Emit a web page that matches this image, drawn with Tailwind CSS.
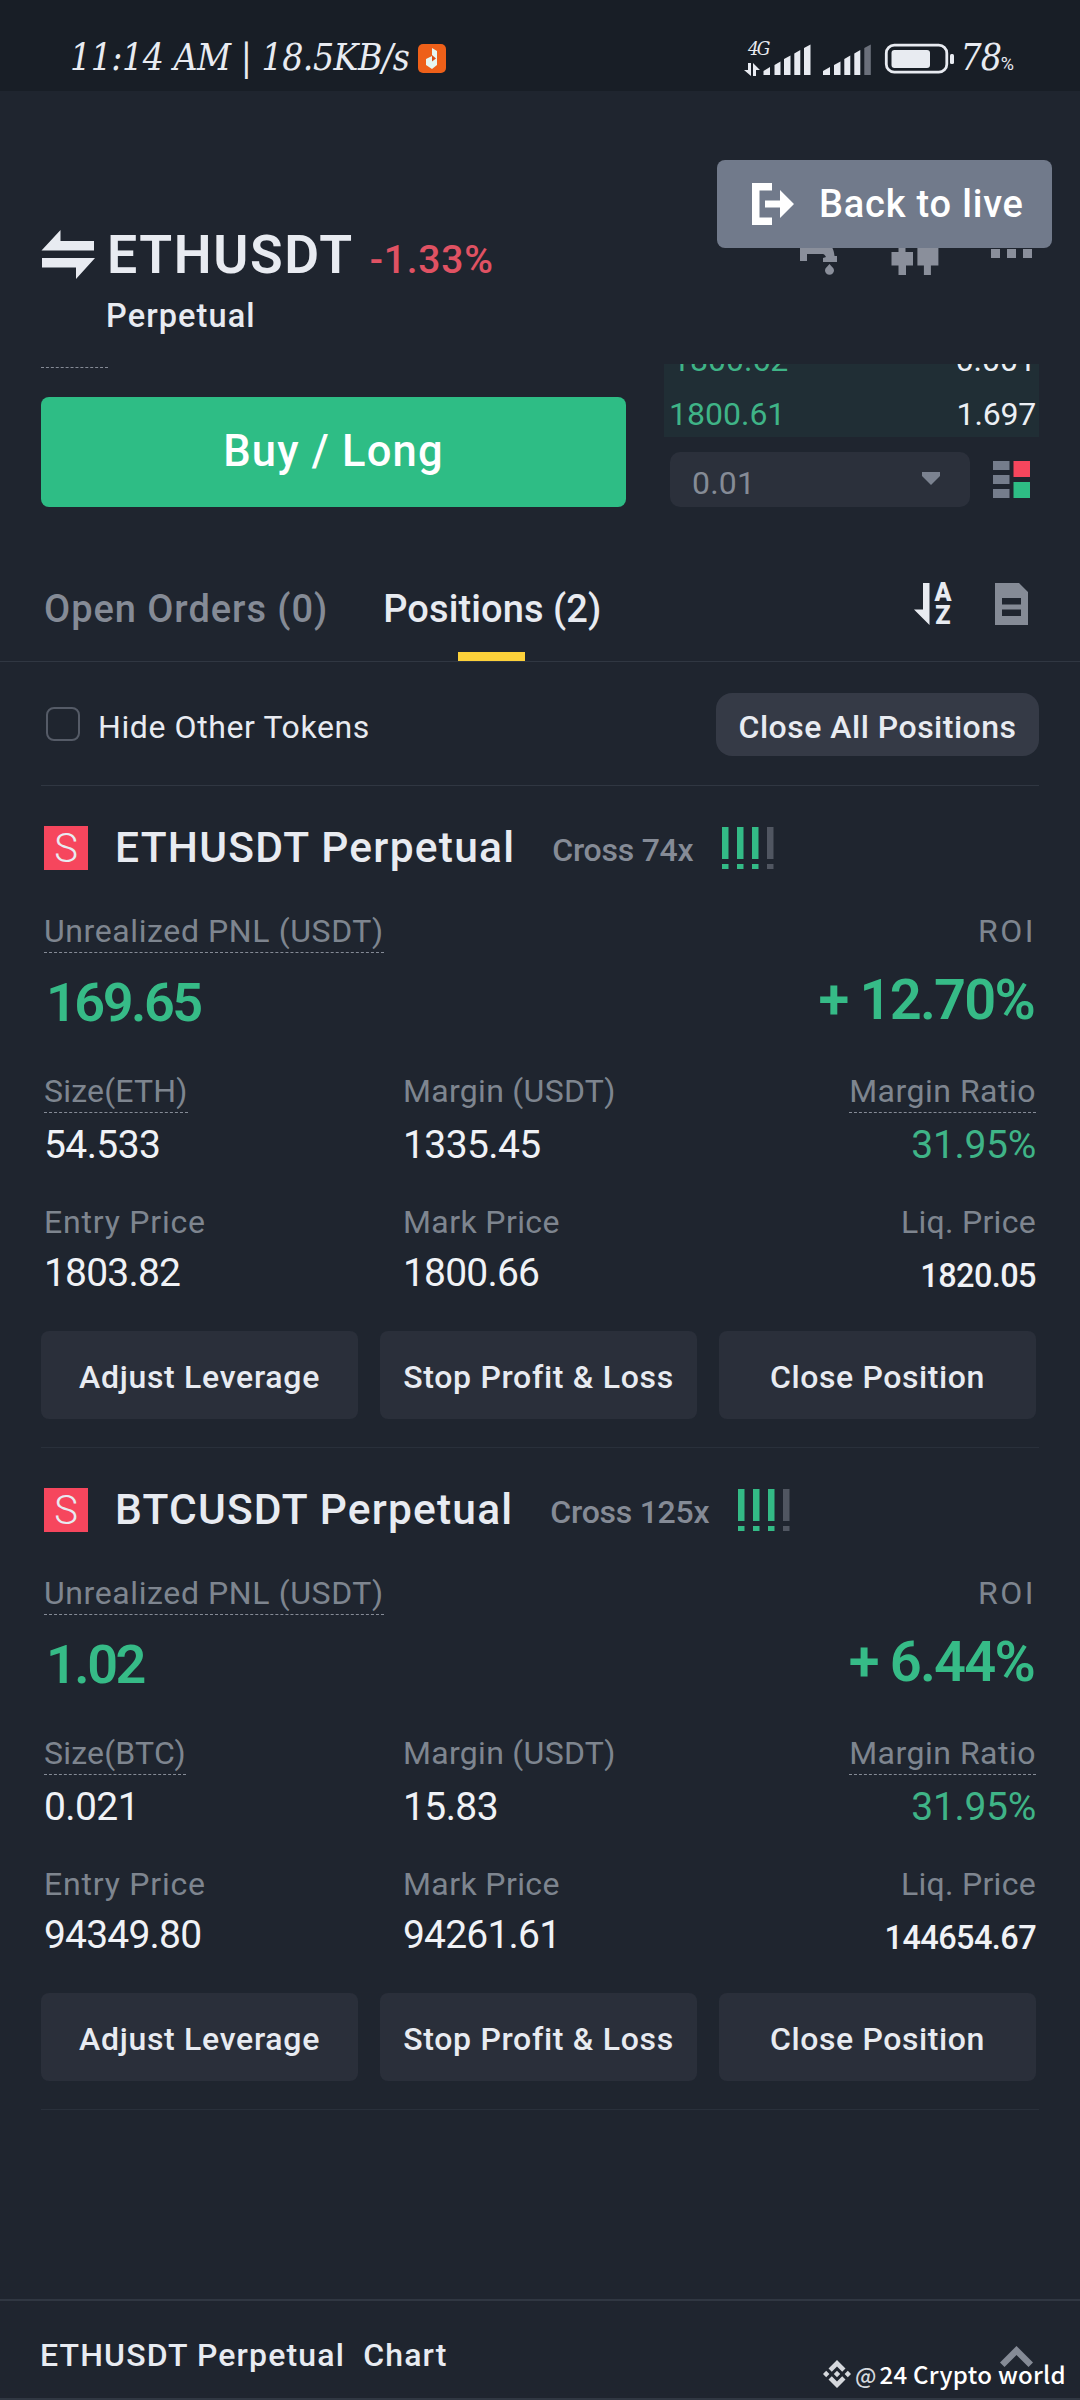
<!DOCTYPE html>
<html lang="en">
<head>
    <meta charset="UTF-8">
    <meta name="viewport" content="width=device-width, initial-scale=1.0">
    <title>ETHUSDT Perpetual</title>
    <script src="https://cdn.jsdelivr.net/npm/@tailwindcss/browser@4"></script>
    <style>
        body {
            font-family: 'Roboto', 'Liberation Sans', sans-serif;
        }
    </style>
</head>
<body class="bg-[#1f252f] text-[#e8ebf1]">
<div class="relative w-[1080px] h-[2400px] flex flex-col overflow-hidden">

    <!-- Status bar -->
    <div class="h-[91px] shrink-0 bg-[#181e26] flex items-center pl-[70px] pr-[67px] pt-[24px]">
        <span class="font-['DejaVu_Serif_Condensed','DejaVu_Serif',serif] italic text-[37px] leading-[67px] tracking-[-0.5px] whitespace-nowrap">11:14 AM | 18.5KB/s</span>
        <svg class="ml-[9px] mt-[2px]" width="28" height="29" viewBox="0 0 28 29">
            <rect width="28" height="29" rx="5" fill="#ee6019"/>
            <path d="M14 4l5 3v14l-5 4-6-4v-6l6-3z" fill="#e6f7f2"/>
            <path d="M14 11l4 3.500-4 3z" fill="#d8501a"/>
        </svg>
        <svg class="ml-auto" width="210" height="67" viewBox="741 24 210 67">
            <g fill="#e8ebf1">
                <path d="M745 63h3v13l-7-6h4zM750 76h3v-6h4l-7-7z"/>
                <path d="M760.500 75v-4l6.500-4v8zM771.500 75V65l6-3.500V75zM781 75V59l6.500-3.500V75zM791.300 75V53.500l6-3.500v25zM801 75V48l6.500-3.500V75z"/>
                <path d="M820 75v-4l7-4v8zM831 75V65l6.500-3.500V75zM841.300 75V59l6-3.500V75zM851.300 75V53.500l6-3.500v25z"/>
                <path d="M861.300 75V48l6.500-3.500V75z" fill="#6b707b"/>
                <rect x="888.500" y="50" width="38.500" height="18" rx="3"/>
                <rect x="947" y="54" width="4" height="10" rx="1.500"/>
                <text x="745" y="55" font-family="DejaVu Serif Condensed, DejaVu Serif, serif" font-style="italic" font-size="19" letter-spacing="-2">4G</text>
            </g>
            <rect x="883.300" y="45.200" width="60.500" height="27" rx="8" fill="none" stroke="#e8ebf1" stroke-width="2.800"/>
        </svg>
        <span class="ml-[6px] flex items-baseline font-['DejaVu_Serif_Condensed','DejaVu_Serif',serif]">
            <span class="text-[37px] leading-[67px] italic tracking-[-1px]">78</span>
            <span class="text-[18px] tracking-[-1px] font-['Roboto',sans-serif]">%</span>
        </span>
    </div>

    <!-- Pair header -->
    <header class="relative h-[273px] shrink-0 pt-[134px] pl-[41px]">
        <div class="flex items-center h-[60px]">
            <svg width="54" height="50" viewBox="0 0 54 50" fill="#e8ebf1">
                <path d="M.500 20.500L19.500 0v11H53v9.500zM1 28h53L35 49V37.500H1z"/>
            </svg>
            <h1 class="ml-[12px] text-[53.5px] font-semibold leading-[60px] tracking-[1.6px]">ETHUSDT</h1>
            <span class="ml-[16px] mt-[10px] text-[39px] leading-[60px] tracking-[0.8px] text-[#e05263] font-medium">-1.33%</span>
        </div>
        <p class="pl-[65px] mt-[11px] text-[32.5px] leading-[40px] font-medium tracking-[1.1px]">Perpetual</p>

        <!-- Toolbar icons, partly covered by the floating button -->
        <svg class="absolute left-[800px] top-[149px]" width="236" height="36" viewBox="800 240 236 36" fill="#8a8f9b">
            <path d="M800 240h24c7 3 10 9 10.500 16H837v6h-14v-4l3-1c-1-2-2-3-4-3h-15v7h-7z"/>
            <path d="M829.500 264c2.500 3 4.500 4 4.500 6.500a4.500 4.200 0 0 1-9 0c0-2.500 2-3.500 4.500-6.500z"/>
            <path d="M898.500 240h7v12h7.500v13.500h-7V275h-7.500v-9.500h-7V252h7zM917.400 240h21v25.500h-7.500v9.500h-7v-9.500h-6.500z"/>
            <path d="M991 249h9v9h-9zM1007 249h9v9h-9zM1023 249h9v9h-9z"/>
        </svg>
        <button class="absolute left-[717px] top-[69px] w-[335px] h-[88px] rounded-lg bg-[#717a8b] text-white flex items-center pl-[35px]">
            <svg width="42" height="42" viewBox="0 0 42 42" fill="#fff">
                <path d="M0 0h20v7.500H7.500v27H20V42H0zM13 17.500h15V7l14 14-14 14V24.500H13z"/>
            </svg>
            <span class="ml-[25px] text-[38px] leading-[60px] font-medium tracking-[0.8px] whitespace-nowrap">Back to live</span>
        </button>
    </header>

    <!-- Order form tail / order book tail -->
    <section class="h-[143px] shrink-0 pl-[41px] pr-[41px] flex">
        <div class="w-[585px]">
            <div class="w-[67px] h-[4px] border-b border-dashed border-[#858b96]"></div>
            <button class="mt-[29px] w-full h-[110px] rounded-lg bg-[#2ebd85] text-white text-[43.5px] font-medium tracking-[1.2px] leading-[110px]">Buy / Long</button>
        </div>
        <div class="ml-[38px] w-[375px]">
            <div class="h-[73px] overflow-hidden bg-[#202e35] flex flex-col justify-end text-[32px] leading-[54px] pl-[5px] pr-[3px]">
                <div class="flex justify-between pl-[3px]"><span class="text-[#3fb487]">1800.62</span><span class="text-[#eceff4]">0.001</span></div>
                <div class="flex justify-between h-[50px]"><span class="text-[#3fb487]">1800.61</span><span class="text-[#eceff4] tracking-[-0.2px]">1.697</span></div>
            </div>
            <div class="mt-[15px] pl-[6px] flex items-center">
                <div class="w-[300px] h-[55px] rounded-[10px] bg-[#2b303b] flex items-center justify-between pl-[22px] pr-[30px]">
                    <span class="pt-[6px] text-[32px] leading-[50px] tracking-[0.2px] text-[#858b96]">0.01</span>
                    <svg class="mb-[2px]" width="18" height="13" viewBox="0 0 18 13" fill="#7b8290"><path d="M0 0h18v4L9 13 0 4z"/></svg>
                </div>
                <svg class="ml-[23px]" width="37" height="37" viewBox="0 0 37 37">
                    <path d="M0 0h16.500v9H0zM0 14h16.500v9H0zM0 28h16.500v9H0z" fill="#757d8c"/>
                    <path d="M20.500 0H37v16H20.500z" fill="#f6465d"/>
                    <path d="M20.500 21H37v16H20.500z" fill="#2ebd85"/>
                </svg>
            </div>
        </div>
    </section>

    <!-- Tabs -->
    <nav class="h-[155px] shrink-0 border-b border-[#303742] flex items-end pl-[44px] pr-[52px] text-[38px] font-medium whitespace-nowrap">
        <span class="h-[82px] leading-[60px] tracking-[0.95px] text-[#858b96]">Open Orders (0)</span>
        <div class="ml-[55px] h-[82px] relative">
            <span class="leading-[60px] tracking-[0.1px]">Positions (2)</span>
            <div class="absolute left-[75px] bottom-0 w-[67px] h-[9px] bg-[#fcd13a]"></div>
        </div>
        <div class="ml-auto mb-[34px] flex items-center">
            <svg width="16" height="42" viewBox="0 0 16 42" fill="#e8ebf1"><path d="M9 0h6.500v42L0 26.500h9z"/></svg>
            <div class="ml-[4px] w-[18px] flex flex-col items-center text-[25px] leading-[23px] font-black">
                <span>A</span>
                <span>Z</span>
            </div>
            <svg class="ml-[43px]" width="33" height="42" viewBox="0 0 33 42" fill="#858b96"><path fill-rule="evenodd" d="M0 0h24l9 9v33H0zM7 15v6.500h19V15zM7 26.500V33h19v-6.500z"/></svg>
        </div>
    </nav>

    <!-- Filter row -->
    <div class="h-[124px] shrink-0 mx-[41px] border-b border-[#303742] flex items-start">
        <div class="ml-[5px] mt-[45px] w-[34px] h-[34px] rounded-[8px] border-[2.500px] border-2 border-[#555b67]"></div>
        <span class="ml-[18px] mt-[43px] text-[32px] leading-[44px] tracking-[0.6px]">Hide Other Tokens</span>
        <button class="ml-auto mt-[31px] w-[323px] h-[63px] rounded-2xl bg-[#353a46] text-[32px] font-medium leading-[68px] tracking-[0.5px]">Close All Positions</button>
    </div>

    <!-- ETHUSDT position -->
    <article class="h-[662px] shrink-0 mx-[41px] border-b border-[#29303b] pt-8">
        <div class="flex items-center h-[60px] pl-[3px]">
            <span class="w-[44px] h-[44px] bg-[#f6465d] text-center text-[40px] leading-[46px] font-light">S</span>
            <h2 class="ml-[27px] text-[42.5px] leading-[60px] font-medium tracking-[1.25px] whitespace-nowrap">ETHUSDT Perpetual</h2>
            <span class="ml-[37px] mt-[5px] text-[32px] leading-[55px] font-medium tracking-[-0.25px] text-[#858b96]">Cross 74x</span>
            <svg class="ml-[29px] mb-[1px]" width="52" height="42" viewBox="0 0 52 42">
                <path d="M0 0h6.500v32H0zM0 37h6.500v5H0zM15 0h6.500v32H15zM15 37h6.500v5H15zM30 0h6.500v32H30zM30 37h6.500v5H30z" fill="#33bb86"/>
                <path d="M45 0h6.500v32H45zM45 37h6.500v5H45z" fill="#505661"/>
            </svg>
        </div>
        <div class="flex justify-between mt-8 px-[3px] text-[32px] leading-[42px] text-[#7e858f]">
            <span class="border-b border-dashed border-[#858b96] tracking-[0.6px]">Unrealized PNL (USDT)</span>
            <span class="tracking-[2.5px]">ROI</span>
        </div>
        <div class="flex justify-between h-[60px] mt-[20px] pl-[5px] pr-[5px] text-[#36bb87] font-semibold">
            <span class="text-[54px] leading-[60px] tracking-[-2.5px]">169.65</span>
            <span class="text-[56px] leading-[54px] tracking-[-1.8px]">+ 12.70%</span>
        </div>
        <div class="grid grid-cols-[359px_1fr_auto] mt-[37px] px-[3px] text-[32px] leading-[42px] text-[#7e858f]">
            <span class="justify-self-start border-b border-dashed border-[#858b96] tracking-[0.2px]">Size(ETH)</span>
            <span class="tracking-[0.3px]">Margin (USDT)</span>
            <span class="border-b border-dashed border-[#858b96] tracking-[0.5px]">Margin Ratio</span>
        </div>
        <div class="grid grid-cols-[359px_1fr_auto] mt-[10px] px-[3px] text-[39px] leading-[44px] tracking-[-0.6px] text-[#f0f2f6]">
            <span>54.533</span>
            <span>1335.45</span>
            <span class="text-[#3fb487] tracking-[-0.3px]">31.95%</span>
        </div>
        <div class="grid grid-cols-[359px_1fr_auto] mt-[34px] px-[3px] text-[32px] leading-[42px] text-[#7e858f]">
            <span class="tracking-[0.8px]">Entry Price</span>
            <span class="tracking-[0.4px]">Mark Price</span>
            <span class="tracking-[0.3px]">Liq. Price</span>
        </div>
        <div class="grid grid-cols-[359px_1fr_auto] h-[44px] mt-[8px] px-[3px] text-[39px] leading-[44px] tracking-[-0.8px] text-[#f0f2f6]">
            <span>1803.82</span>
            <span>1800.66</span>
            <span class="text-[32.5px] leading-[50px] font-medium tracking-[-0.6px]">1820.05</span>
        </div>
        <div class="flex gap-[22px] mt-[36px] text-[32px] font-medium leading-[92px]">
            <button class="w-[317px] h-[88px] rounded-lg bg-[#2a2f3a] tracking-[0.7px]">Adjust Leverage</button>
            <button class="w-[317px] h-[88px] rounded-lg bg-[#2a2f3a] tracking-[0.7px]">Stop Profit &amp; Loss</button>
            <button class="w-[317px] h-[88px] rounded-lg bg-[#2a2f3a] tracking-[0.6px]">Close Position</button>
        </div>
    </article>

    <!-- BTCUSDT position -->
    <article class="h-[662px] shrink-0 mx-[41px] border-b border-[#29303b] pt-8">
        <div class="flex items-center h-[60px] pl-[3px]">
            <span class="w-[44px] h-[44px] bg-[#f6465d] text-center text-[40px] leading-[46px] font-light">S</span>
            <h2 class="ml-[27px] text-[42.5px] leading-[60px] font-medium tracking-[1.2px] whitespace-nowrap">BTCUSDT Perpetual</h2>
            <span class="ml-[37px] mt-[5px] text-[32px] leading-[55px] font-medium tracking-[-0.25px] text-[#858b96]">Cross 125x</span>
            <svg class="ml-[29px] mb-[1px]" width="52" height="42" viewBox="0 0 52 42">
                <path d="M0 0h6.500v32H0zM0 37h6.500v5H0zM15 0h6.500v32H15zM15 37h6.500v5H15zM30 0h6.500v32H30zM30 37h6.500v5H30z" fill="#33bb86"/>
                <path d="M45 0h6.500v32H45zM45 37h6.500v5H45z" fill="#505661"/>
            </svg>
        </div>
        <div class="flex justify-between mt-8 px-[3px] text-[32px] leading-[42px] text-[#7e858f]">
            <span class="border-b border-dashed border-[#858b96] tracking-[0.6px]">Unrealized PNL (USDT)</span>
            <span class="tracking-[2.5px]">ROI</span>
        </div>
        <div class="flex justify-between h-[60px] mt-[20px] pl-[5px] pr-[5px] text-[#36bb87] font-semibold">
            <span class="text-[54px] leading-[60px] tracking-[-2.5px]">1.02</span>
            <span class="text-[56px] leading-[54px] tracking-[-1.8px]">+ 6.44%</span>
        </div>
        <div class="grid grid-cols-[359px_1fr_auto] mt-[37px] px-[3px] text-[32px] leading-[42px] text-[#7e858f]">
            <span class="justify-self-start border-b border-dashed border-[#858b96] tracking-[0.2px]">Size(BTC)</span>
            <span class="tracking-[0.3px]">Margin (USDT)</span>
            <span class="border-b border-dashed border-[#858b96] tracking-[0.5px]">Margin Ratio</span>
        </div>
        <div class="grid grid-cols-[359px_1fr_auto] mt-[10px] px-[3px] text-[39px] leading-[44px] tracking-[-0.6px] text-[#f0f2f6]">
            <span>0.021</span>
            <span>15.83</span>
            <span class="text-[#3fb487] tracking-[-0.3px]">31.95%</span>
        </div>
        <div class="grid grid-cols-[359px_1fr_auto] mt-[34px] px-[3px] text-[32px] leading-[42px] text-[#7e858f]">
            <span class="tracking-[0.8px]">Entry Price</span>
            <span class="tracking-[0.4px]">Mark Price</span>
            <span class="tracking-[0.3px]">Liq. Price</span>
        </div>
        <div class="grid grid-cols-[359px_1fr_auto] h-[44px] mt-[8px] px-[3px] text-[39px] leading-[44px] tracking-[-0.8px] text-[#f0f2f6]">
            <span>94349.80</span>
            <span>94261.61</span>
            <span class="text-[32.5px] leading-[50px] font-medium tracking-[-0.6px]">144654.67</span>
        </div>
        <div class="flex gap-[22px] mt-[36px] text-[32px] font-medium leading-[92px]">
            <button class="w-[317px] h-[88px] rounded-lg bg-[#2a2f3a] tracking-[0.7px]">Adjust Leverage</button>
            <button class="w-[317px] h-[88px] rounded-lg bg-[#2a2f3a] tracking-[0.7px]">Stop Profit &amp; Loss</button>
            <button class="w-[317px] h-[88px] rounded-lg bg-[#2a2f3a] tracking-[0.6px]">Close Position</button>
        </div>
    </article>

    <!-- Chart drawer -->
    <footer class="mt-auto h-[101px] shrink-0 border-y-2 border-[#303742] flex items-start justify-between pl-[40px] pr-[47px]">
        <span class="mt-[32px] text-[32px] leading-[44px] font-medium tracking-[1.15px] whitespace-pre">ETHUSDT Perpetual  Chart</span>
        <svg class="mt-[45px]" width="33" height="21" viewBox="0 0 33 21" fill="#858b96"><path d="M16.500 0L33 16.500 28.500 21l-12-12-12 12L0 16.500z"/></svg>
    </footer>

    <!-- Author mark -->
    <div class="absolute right-[14px] bottom-[8px] flex items-center text-white font-['Noto_Sans_CJK_SC','Noto_Sans',sans-serif] text-[24px] leading-[36px] font-medium whitespace-nowrap">
        <svg width="28" height="28" viewBox="0 0 28 28" fill="#d5d8dd">
            <path d="M14 0l8.500 8.500-3.300 3.300L14 6.600l-5.200 5.200-3.300-3.300zM14 28l8.500-8.500-3.300-3.300L14 21.400l-5.200-5.200-3.300 3.300zM3.200 10.800L6.400 14l-3.200 3.200L0 14zM24.800 10.800L28 14l-3.200 3.200L21.600 14zM14 10.800l3.200 3.200-3.200 3.200-3.200-3.200z"/>
        </svg>
        <span class="ml-[4px] text-[#d5d8dd] text-[22px]">@</span>
        <span class="ml-[3px] tracking-[0.3px]">24 Crypto world</span>
    </div>
</div>
</body>
</html>
